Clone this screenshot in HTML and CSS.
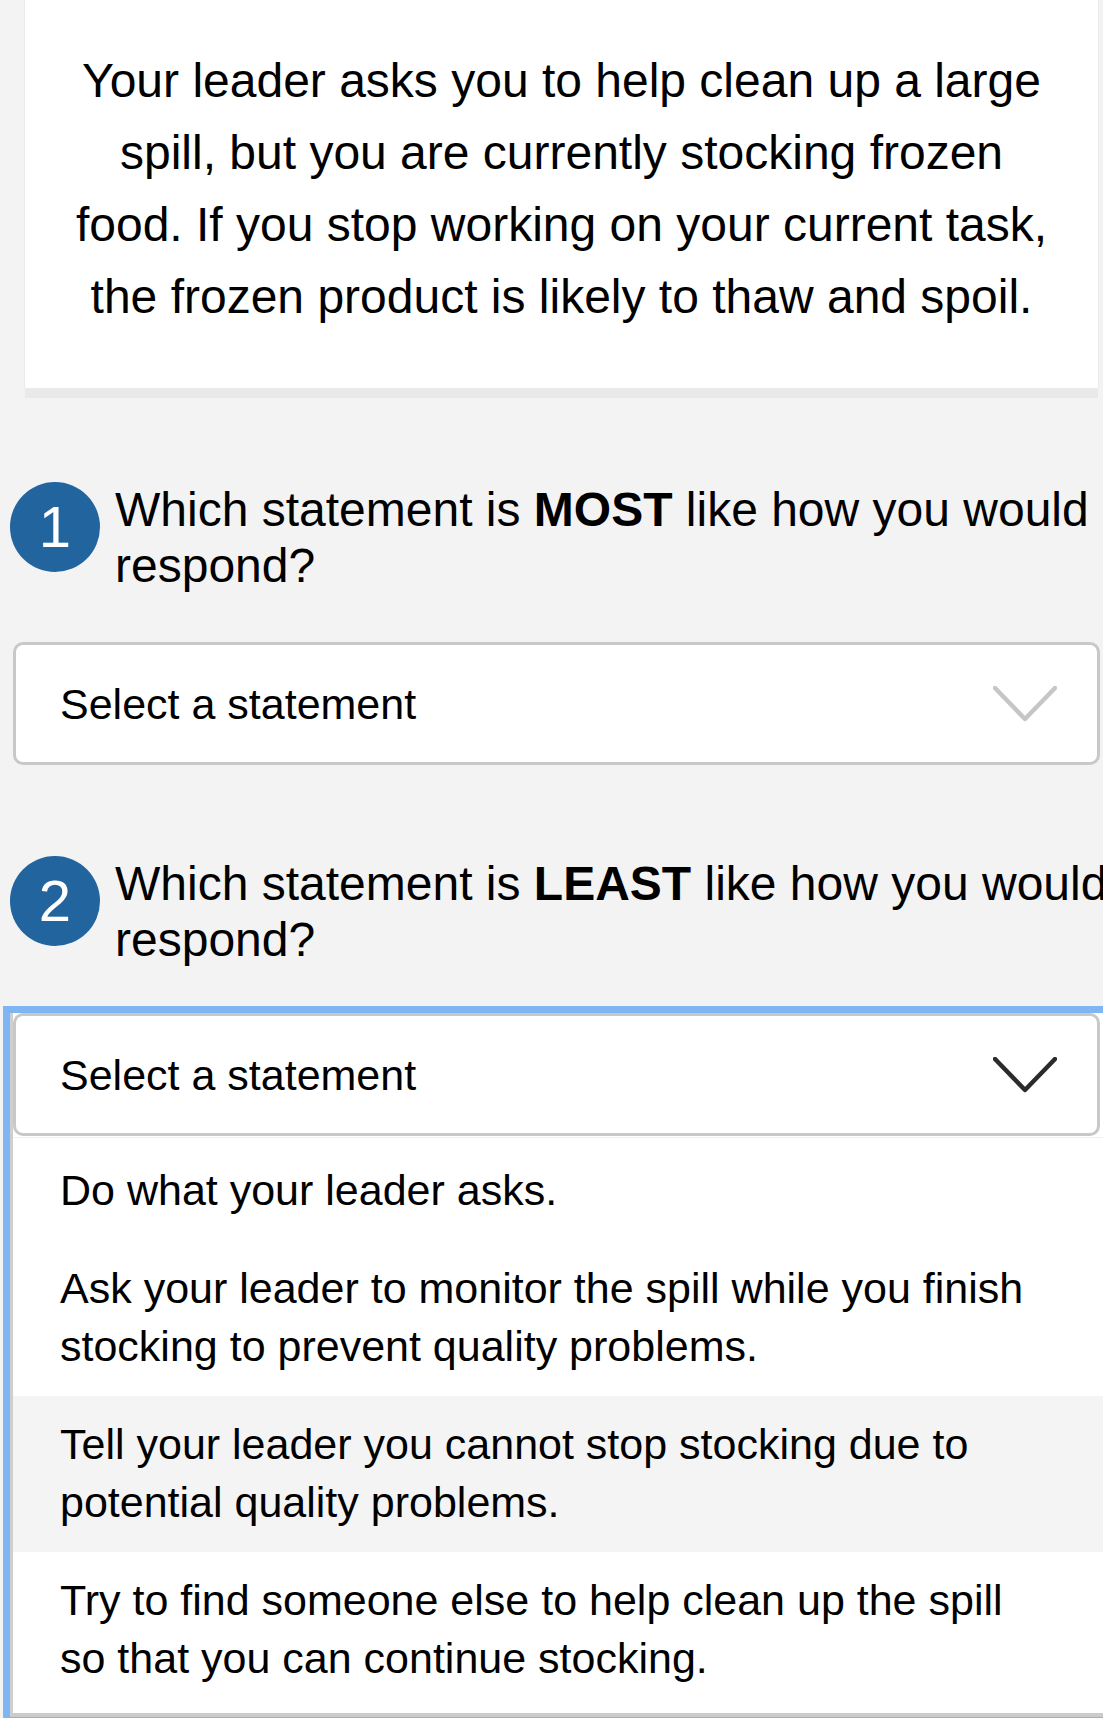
FILE: index.html
```html
<!DOCTYPE html>
<html lang="en">
<head>
<meta charset="utf-8">
<title>Situational question</title>
<link rel="stylesheet" href="styles.css">
</head>
<body>
<div class="page">
  <div class="card">
    <p class="scenario">Your leader asks you to help clean up a large spill, but you are currently stocking frozen food. If you stop working on your current task, the frozen product is likely to thaw and spoil.</p>
  </div>

  <div class="question q1">
    <div class="num">1</div>
    <div class="qtext">Which statement is <b>MOST</b> like how you would respond?</div>
  </div>
  <div class="select select-1">
    <span class="placeholder">Select a statement</span>
    <svg class="chev chev-light" width="64" height="36" viewBox="0 0 64 36"><polyline points="2,2 32,33 62,2" fill="none" stroke-width="4.5" stroke-linecap="round" stroke-linejoin="round"/></svg>
  </div>

  <div class="question q2">
    <div class="num">2</div>
    <div class="qtext">Which statement is <b>LEAST</b> like how you would respond?</div>
  </div>
  <div class="dropdown">
    <div class="select select-2">
      <span class="placeholder">Select a statement</span>
      <svg class="chev chev-dark" width="64" height="36" viewBox="0 0 64 36"><polyline points="2,2 32,33 62,2" fill="none" stroke-width="4.5" stroke-linecap="round" stroke-linejoin="round"/></svg>
    </div>
    <ul class="options">
      <li class="option">Do what your leader asks.</li>
      <li class="option">Ask your leader to monitor the spill while you finish stocking to prevent quality problems.</li>
      <li class="option option-hover">Tell your leader you cannot stop stocking due to potential quality problems.</li>
      <li class="option">Try to find someone else to help clean up the spill so that you can continue stocking.</li>
    </ul>
  </div>
</div>
</body>
</html>
```

FILE: styles.css
```css
html, body {
  margin: 0;
  padding: 0;
  background: #f3f3f3;
  overflow-x: hidden;
}

body {
  font-family: "Liberation Sans", Arial, Helvetica, sans-serif;
  color: #000;
}

.page {
  width: 1125px;
  padding-bottom: 40px;
}

.card {
  margin: 0 27px 0 25px;
  background: #ffffff;
  padding: 45px 45px 55px;
  box-shadow: 0 0 0 1px #ebebeb, 0 10px 0 0 #e9e9e9;
}

.scenario {
  margin: 0;
  font-size: 48px;
  line-height: 72px;
  text-align: center;
}

.question {
  display: flex;
  align-items: flex-start;
  padding-left: 10px;
}

.q1 { margin-top: 94px; }
.q2 { margin-top: 91px; }

.num {
  flex: 0 0 auto;
  width: 90px;
  height: 90px;
  border-radius: 50%;
  background: #22649e;
  color: #ffffff;
  font-size: 58px;
  line-height: 90px;
  text-align: center;
  margin-right: 15px;
}

.qtext {
  flex: 1 1 auto;
  font-size: 48px;
  line-height: 56px;
  padding-right: 5px;
}

.qtext b {
  font-weight: bold;
}

.select {
  box-sizing: border-box;
  display: flex;
  align-items: center;
  justify-content: space-between;
  width: 1087px;
  height: 123px;
  background: #ffffff;
  border: 3px solid #c8c8c8;
  border-radius: 10px;
  padding: 0 40px 0 44px;
  font-size: 43px;
  line-height: 50px;
}

.select-1 {
  margin: 48px 0 0 13px;
}

.chev-light polyline { stroke: #c6c6c6; }
.chev-dark polyline { stroke: #2b2b2b; }

.dropdown {
  margin: 45px 0 0 10px;
  width: 1110px;
  background: #ffffff;
  outline: 7px solid #7fb5f3;
  border-left: 3px solid #cfcfcf;
  border-bottom: 4px solid #cbcbcb;
}

.select-2 {
  margin: 1px 0 0 0;
  width: 1087px;
}

.options {
  list-style: none;
  margin: 0;
  padding: 4px 0 5px;
  border-top: 1px solid #f0f0f0;
  margin-top: 1px;
}

.option {
  padding: 19px 78px 21px 47px;
  font-size: 43px;
  line-height: 58px;
  background: #ffffff;
}

.option-hover {
  background: #f4f4f4;
}
```
